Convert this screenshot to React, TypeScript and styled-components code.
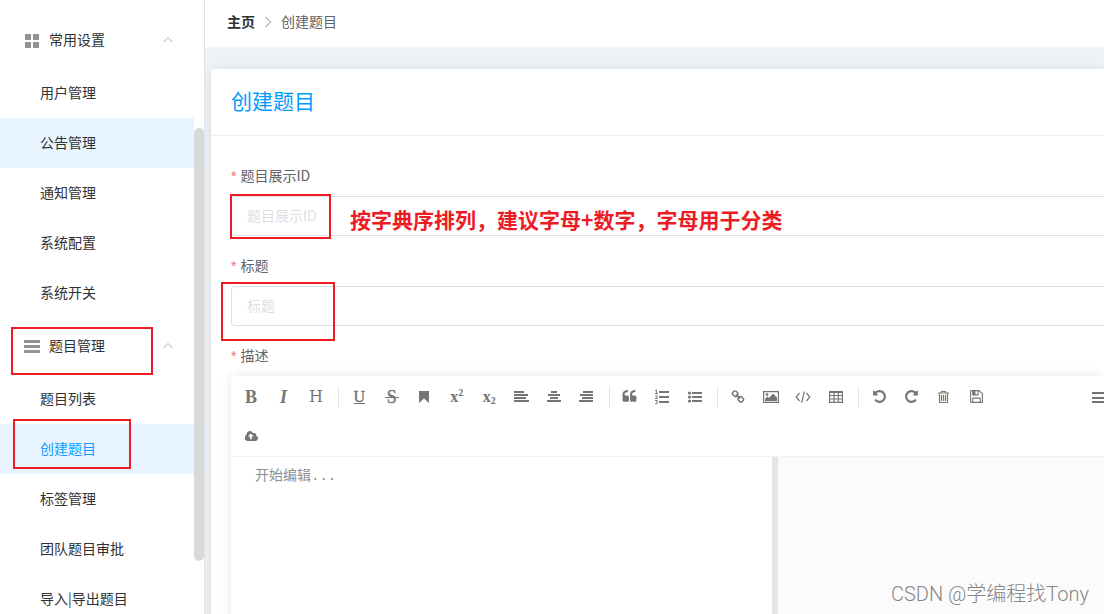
import React from 'react';
import styled, { createGlobalStyle } from 'styled-components';

const GlobalStyle = createGlobalStyle`
  * { box-sizing: border-box; }
  body {
    margin: 0;
    background: #edf2f6;
    color: #303133;
    font-family: "Noto Sans CJK SC", sans-serif;
    font-size: 14px;
  }
  button, input, textarea { font: inherit; }
`;

const Page = styled.div`
  position: relative;
  display: flex;
  height: 100vh;
  overflow: hidden;
`;

/* ---------- sidebar ---------- */

const Sidebar = styled.nav`
  position: relative;
  flex: 0 0 205px;
  padding: 12px 10px 0 0;
  overflow: hidden;
  background: #fff;
  border-right: 1px solid #dfe2e6;
`;

const GroupTitle = styled.button`
  display: flex;
  align-items: center;
  width: 100%;
  height: 56px;
  padding: 0 20px 0 24px;
  border: 0;
  background: none;
  color: inherit;
  text-align: left;
  gap: 9px;
  & > span { flex: 1; padding-bottom: 2px; }
`;

const MenuList = styled.ul`
  margin: 0;
  padding: 0;
  list-style: none;
`;

const MenuLink = styled.a<{ $tinted?: boolean; $active?: boolean }>`
  display: block;
  height: 50px;
  padding-left: 40px;
  line-height: 48px;
  text-decoration: none;
  white-space: nowrap;
  color: ${(p) => (p.$active ? '#0f9bff' : '#303133')};
  background: ${(p) => (p.$tinted ? '#e8f5ff' : 'transparent')};
`;

const ScrollThumb = styled.div`
  position: absolute;
  top: 128px;
  right: 0;
  width: 10px;
  height: 433px;
  border-radius: 5px;
  background: #d9d9d9;
`;

/* ---------- main column ---------- */

const Main = styled.main`
  flex: 1;
  min-width: 0;
  display: flex;
  flex-direction: column;
`;

const Breadcrumb = styled.nav`
  display: flex;
  align-items: center;
  flex: 0 0 48px;
  gap: 8px;
  padding: 0 0 6px 22px;
  background: #fff;
  border-bottom: 1px solid #f5f7f9;
  color: #606266;
  & > a {
    color: #303133;
    font-weight: 700;
    text-decoration: none;
  }
`;

const Card = styled.section`
  flex: 1;
  margin: 21px 0 0 6px;
  background: #fff;
  border-radius: 4px 0 0 0;
  box-shadow: 0 2px 12px rgba(0, 0, 0, 0.1);
`;

const CardTitle = styled.h1`
  margin: 0;
  height: 67px;
  padding-left: 20px;
  border-bottom: 1px solid #ebeef5;
  color: #009bff;
  font-size: 21px;
  font-weight: 400;
  line-height: 62px;
`;

const Form = styled.form`
  padding: 20px 0 0 20px;
`;

const Field = styled.div`
  margin-bottom: 10px;
`;

const Label = styled.label`
  display: block;
  height: 40px;
  line-height: 38px;
  color: #606266;
  &::before {
    content: "*";
    margin-right: 4px;
    color: #f56c6c;
    font-family: "Liberation Sans", sans-serif;
  }
`;

const TextInput = styled.input`
  display: block;
  width: 100%;
  height: 40px;
  padding: 0 15px 2px;
  border: 1px solid #dcdfe6;
  border-right: 0;
  border-radius: 4px 0 0 4px;
  background: #fff;
  outline: none;
  &::placeholder { color: #dcdfe6; opacity: 1; }
`;

/* ---------- markdown editor ---------- */

const Editor = styled.div`
  display: flex;
  flex-direction: column;
  border-radius: 4px 0 0 0;
  background: #fff;
  box-shadow: 0 0 12px rgba(0, 0, 0, 0.1);
`;

const Toolbar = styled.div`
  display: flex;
  border-bottom: 1px solid #eef4fb;
`;

const Tools = styled.div`
  flex: 1;
  padding: 0 80px 0 6px;
  font-family: "Liberation Sans", sans-serif;
  font-size: 16px;
  line-height: 40px;
`;

const ViewTools = styled.div`
  flex: 0 0 20px;
  overflow: hidden;
  white-space: nowrap;
  line-height: 40px;
`;

const Tool = styled.button`
  display: inline-flex;
  align-items: center;
  justify-content: center;
  width: 28px;
  height: 28px;
  padding: 0;
  border: 0;
  background: none;
  color: #757575;
  vertical-align: middle;
  line-height: 28px;
`;

const ToolDivider = styled.span`
  display: inline-block;
  height: 22px;
  margin: 0 6px 0 4px;
  border-left: 1px solid #e5e5e5;
  vertical-align: middle;
`;

const Glyph = styled.span<{ $size?: number; $bold?: boolean; $italic?: boolean; $line?: string }>`
  font-family: "Liberation Serif", serif;
  font-size: ${(p) => p.$size ?? 18}px;
  font-weight: ${(p) => (p.$bold ? 700 : 400)};
  font-style: ${(p) => (p.$italic ? 'italic' : 'normal')};
  text-decoration: ${(p) => p.$line ?? 'none'};
  text-decoration-thickness: 1px;
  -webkit-text-stroke: ${(p) => (p.$bold ? '0' : '0.4px')} currentColor;
  & > sup, & > sub { font-size: 10px; line-height: 0; }
  & > sub { vertical-align: -2px; }
`;

const WideGlyph = styled(Glyph)`
  font-family: "DejaVu Serif", serif;
  -webkit-text-stroke: 0;
`;

const StruckGlyph = styled(Glyph)`
  padding: 0 2px;
  background: linear-gradient(currentColor, currentColor) center 52% / 100% 1px no-repeat;
`;

const Panes = styled.div`
  display: flex;
  height: 420px;
`;

const Writing = styled.textarea`
  flex: 1 1 541px;
  min-width: 0;
  padding: 8px 24px;
  border: 0;
  outline: none;
  resize: none;
  background: #fff;
  font-family: "Liberation Mono", "Noto Sans CJK SC", monospace;
  font-size: 14px;
  line-height: 22px;
  &::placeholder { color: #8b8f96; opacity: 1; }
`;

const Preview = styled.div`
  flex: 0 1 332px;
  border-left: 6px solid #e5e5e5;
  background: #fbfbfb;
`;

/* ---------- annotations drawn over the page ---------- */

const Mark = styled.div<{ $x: number; $y: number; $w: number; $h: number }>`
  position: absolute;
  left: ${(p) => p.$x}px;
  top: ${(p) => p.$y}px;
  width: ${(p) => p.$w}px;
  height: ${(p) => p.$h}px;
  border: 2px solid #ed1c24;
  pointer-events: none;
`;

const Note = styled.strong`
  position: absolute;
  left: 350px;
  top: 203px;
  color: #ed1c24;
  font-size: 21px;
  line-height: 32px;
  white-space: nowrap;
  pointer-events: none;
`;

const Watermark = styled.div`
  position: absolute;
  right: 15px;
  bottom: 4px;
  color: #858585;
  font-family: Roboto, "Noto Sans CJK SC", sans-serif;
  font-size: 20px;
  font-weight: 300;
  line-height: 32px;
  text-shadow: -1px -1px 0 #fff;
  white-space: nowrap;
  pointer-events: none;
`;

/* ---------- icons ---------- */

const GridIcon = () => (
  <svg width="16" height="16" viewBox="0 0 16 16" fill="#909399">
    <path d="M1 2h6v6H1zM9 2h6v6H9zM1 10h6v6H1zM9 10h6v6H9z" />
  </svg>
);

const BarsIcon = () => (
  <svg width="16" height="16" viewBox="0 0 16 16" fill="#909399">
    <path d="M0 2h16v3H0zM0 7h16v3H0zM0 12h16v3H0z" />
  </svg>
);

const ChevronUp = () => (
  <svg width="12" height="12" viewBox="0 0 12 12" fill="none" stroke="#a5a8ae">
    <path d="M1.5 8L6 3.5L10.5 8" />
  </svg>
);

const ChevronRight = () => (
  <svg width="10" height="14" viewBox="0 0 10 14" fill="none" stroke="#b4b8c0" strokeWidth="1.2">
    <path d="M2.5 3L7.5 8L2.5 13" />
  </svg>
);

const FA = ({ d, w = 15, box = '0 0 1792 1792' }: { d: string; w?: number; box?: string }) => (
  <svg width={w} height={w} viewBox={box} fill="currentColor">
    <path d={d} />
  </svg>
);

const Px = ({ children }: { children: React.ReactNode }) => (
  <svg width="16" height="16" viewBox="0 0 16 16" fill="currentColor">
    {children}
  </svg>
);

const quoteHalf =
  'v384q0 80-56 136t-136 56h-384q-80 0-136-56t-56-136v-704q0-104 40.5-198.5t109.5-163.5 163.5-109.5 198.5-40.5h64q26 0 45 19t19 45v128q0 26-19 45t-45 19h-64q-106 0-181 75t-75 181v32q0 40 28 68t68 28h224q80 0 136 56t56 136z';

const paths = {
  quote: `M832 960${quoteHalf}M1728 960${quoteHalf}`,
  link: 'M1520 1216q0-40-28-68l-208-208q-28-28-68-28-42 0-72 32 3 3 19 18.5t21.5 21.5 15 19 13 25.5 3.5 27.5q0 40-28 68t-68 28q-15 0-27.5-3.5t-25.5-13-19-15-21.5-21.5-18.5-19q-33 31-33 73 0 40 28 68l206 207q27 27 68 27 40 0 68-26l147-146q28-28 28-67zm-703-705q0-40-28-68l-206-207q-28-28-68-28-39 0-68 27l-147 146q-28 28-28 67 0 40 28 68l208 208q27 27 68 27 42 0 72-31-3-3-19-18.5t-21.5-21.5-15-19-13-25.5-3.5-27.5q0-40 28-68t68-28q15 0 27.5 3.5t25.5 13 19 15 21.5 21.5 18.5 19q33-31 33-73zm895 705q0 120-85 203l-147 146q-83 83-203 83-121 0-204-85l-206-207q-83-83-83-203 0-123 88-209l-88-88q-86 88-208 88-120 0-204-84l-208-208q-84-84-84-204t85-203l147-146q83-83 203-83 121 0 204 85l206 207q83 83 83 203 0 123-88 209l88 88q86-88 208-88 120 0 204 84l208 208q84 84 84 204z',
  undo: 'M1664 896q0 156-61 298t-164 245-245 164-298 61q-172 0-327-72.5t-264-204.5q-7-10-6.5-22.5t8.5-20.5l137-138q10-9 25-9 16 2 23 12 73 95 179 147t225 52q104 0 198.5-40.5t163.5-109.5 109.5-163.5 40.5-198.5-40.5-198.5-109.5-163.5-163.5-109.5-198.5-40.5q-98 0-188 35.5t-160 101.5l137 138q31 30 14 69-17 40-59 40h-448q-26 0-45-19t-19-45v-448q0-42 40-59 39-17 69 14l130 129q107-101 244.5-156.5t284.5-55.5q156 0 298 61t245 164 164 245 61 298z',
  redo: 'M1664 256v448q0 26-19 45t-45 19h-448q-42 0-59-40-17-39 14-69l138-138q-148-137-349-137-104 0-198.5 40.5t-163.5 109.5-109.5 163.5-40.5 198.5 40.5 198.5 109.5 163.5 163.5 109.5 198.5 40.5q119 0 225-52t179-147q7-10 23-12 15 0 25 9l137 138q9 8 9.5 20.5t-7.5 22.5q-109 132-264 204.5t-327 72.5q-156 0-298-61t-245-164-164-245-61-298 61-298 164-245 245-164 298-61q147 0 284.5 55.5t244.5 156.5l130-129q29-31 70-14 39 17 39 59z',
  save: 'M512 1536h768v-384h-768v384zm896 0h128v-896q0-14-10-38.5t-20-34.5l-281-281q-10-10-34-20t-39-10v416q0 40-28 68t-68 28h-576q-40 0-68-28t-28-68v-416h-128v1280h128v-416q0-40 28-68t68-28h832q40 0 68 28t28 68v416zm-384-928v-320q0-13-9.5-22.5t-22.5-9.5h-192q-13 0-22.5 9.5t-9.5 22.5v320q0 13 9.5 22.5t22.5 9.5h192q13 0 22.5-9.5t9.5-22.5zm640 32v928q0 40-28 68t-68 28h-1344q-40 0-68-28t-28-68v-1344q0-40 28-68t68-28h928q40 0 88 20t76 48l280 280q28 28 48 76t20 88z',
  upload: 'M1216 864q0-14-9-23l-352-352q-9-9-23-9t-23 9l-351 351q-10 12-10 24 0 14 9 23t23 9h224v352q0 13 9.5 22.5t22.5 9.5h192q13 0 22.5-9.5t9.5-22.5v-352h224q13 0 22.5-9.5t9.5-22.5zm640 288q0 159-112.5 271.5t-271.5 112.5h-1088q-185 0-316.5-131.5t-131.5-316.5q0-130 70-240t188-165q-2-30-2-43 0-212 150-362t362-150q156 0 285.5 87t188.5 231q71-62 166-62 106 0 181 75t75 181q0 76-41 138 130 31 213.5 135.5t83.5 238.5z',
};

const tools: (null | [string, React.ReactNode])[] = [
  ['粗体', <Glyph $bold>B</Glyph>],
  ['斜体', <Glyph $bold $italic>I</Glyph>],
  ['标题', <WideGlyph $size={16}>H</WideGlyph>],
  null,
  ['下划线', <Glyph $size={16} $line="underline">U</Glyph>],
  ['中划线', <StruckGlyph>S</StruckGlyph>],
  ['标记', <Px><path d="M3 2h10v12l-5-4.5L3 14z" /></Px>],
  ['上角标', <Glyph $size={16} $bold>x<sup>2</sup></Glyph>],
  ['下角标', <Glyph $size={16} $bold>x<sub>2</sub></Glyph>],
  ['左对齐', <Px><path d="M0 2h10v2H0zM0 5h14v2H0zM0 8h12v2H0zM0 11h15v2H0z" /></Px>],
  ['居中', <Px><path d="M5 2h6v2H5zM2 5h12v2H2zM4 8h8v2H4zM1 11h14v2H1z" /></Px>],
  ['右对齐', <Px><path d="M4 2h10v2H4zM1 5h13v2H1zM3 8h11v2H3zM0 11h14v2H0z" /></Px>],
  null,
  ['段落引用', <FA d={paths.quote} />],
  ['有序列表', (
    <Px>
      <path d="M5 2h10v2H5zM5 7h10v2H5zM5 12h10v2H5z" />
      <path d="M1 2L2.5 1V4.5M1 4.5h3M1 7Q2.5 5.5 3.5 6.8Q3.5 8 1.2 9.5H4M1 11.5h2.5L2.3 13Q4 13.3 3.2 14.6Q2 15.4 1 14.6" fill="none" stroke="currentColor" strokeWidth="0.9" />
    </Px>
  )],
  ['无序列表', (
    <Px>
      <path d="M5 3h10v2H5zM5 7h10v2H5zM5 11h10v2H5z" />
      <circle cx="2.5" cy="4" r="1.6" /><circle cx="2.5" cy="8" r="1.6" /><circle cx="2.5" cy="12" r="1.6" />
    </Px>
  )],
  null,
  ['链接', <FA d={paths.link} w={14} />],
  ['图片', (
    <Px>
      <path fillRule="evenodd" d="M0 2h16v12H0zM1.2 3.2v9.6h13.6V3.2z" />
      <circle cx="4" cy="5.6" r="1.4" />
      <path d="M2 12v-2l2.5-2.5L6 9l4-4.5 4 4V12z" />
    </Px>
  )],
  ['代码块', (
    <Px>
      <path d="M4.5 4L1.2 8L4.5 12M11.5 4L14.8 8L11.5 12M9.4 2.5L6.6 13.8" fill="none" stroke="currentColor" strokeWidth="1.2" />
    </Px>
  )],
  ['表格', (
    <Px>
      <path d="M1.6 2.6h12.8v10.8H1.6zM1 3.3h14M1 6.5h14M1 10h14M6 3v10M10.3 3v10" fill="none" stroke="currentColor" strokeWidth="1.2" />
    </Px>
  )],
  null,
  ['上一步', <FA d={paths.undo} />],
  ['下一步', <FA d={paths.redo} />],
  ['清空', (
    <Px>
      <path d="M2 4h11M5.5 4V2.5h4V4M3.5 4v9.5h8V4M5.5 6v6M7.5 6v6M9.5 6v6" fill="none" stroke="#8a7664" strokeWidth="1.2" />
    </Px>
  )],
  ['保存', <FA d={paths.save} />],
  ['上传', <FA d={paths.upload} w={13} box="0 0 1856 1792" />],
];

const commonItems = ['用户管理', '公告管理', '通知管理', '系统配置', '系统开关'];
const problemItems = ['题目列表', '创建题目', '标签管理', '团队题目审批', '导入|导出题目'];

export default function App() {
  return (
    <Page>
      <GlobalStyle />
      <Sidebar>
        <GroupTitle type="button"><GridIcon /><span>常用设置</span><ChevronUp /></GroupTitle>
        <MenuList>
          {commonItems.map((t) => (
            <li key={t}><MenuLink href="#" $tinted={t === '公告管理'}>{t}</MenuLink></li>
          ))}
        </MenuList>
        <GroupTitle type="button"><BarsIcon /><span>题目管理</span><ChevronUp /></GroupTitle>
        <MenuList>
          {problemItems.map((t) => (
            <li key={t}>
              <MenuLink href="#" $tinted={t === '创建题目'} $active={t === '创建题目'}>{t}</MenuLink>
            </li>
          ))}
        </MenuList>
        <ScrollThumb />
      </Sidebar>

      <Main>
        <Breadcrumb>
          <a href="#">主页</a>
          <ChevronRight />
          <span>创建题目</span>
        </Breadcrumb>
        <Card>
          <CardTitle>创建题目</CardTitle>
          <Form>
            <Field>
              <Label htmlFor="display-id">题目展示ID</Label>
              <TextInput id="display-id" placeholder="题目展示ID" />
            </Field>
            <Field>
              <Label htmlFor="title">标题</Label>
              <TextInput id="title" placeholder="标题" />
            </Field>
            <Label htmlFor="description">描述</Label>
            <Editor>
              <Toolbar>
                <Tools>
                  {tools.map((tool, i) =>
                    tool === null ? (
                      <ToolDivider key={i} />
                    ) : (
                      <React.Fragment key={i}>
                        <Tool type="button" aria-label={tool[0]}>{tool[1]}</Tool>{' '}
                      </React.Fragment>
                    ),
                  )}
                </Tools>
                <ViewTools>
                  <Tool type="button" aria-label="目录">
                    <Px><path d="M2 2h14v2H2zM2 7h14v2H2zM2 11h14v2H2z" /></Px>
                  </Tool>
                </ViewTools>
              </Toolbar>
              <Panes>
                <Writing id="description" placeholder="开始编辑..." />
                <Preview />
              </Panes>
            </Editor>
          </Form>
        </Card>
      </Main>

      <Mark $x={11} $y={327} $w={142} $h={48} />
      <Mark $x={13} $y={419} $w={118} $h={50} />
      <Mark $x={230} $y={194} $w={101} $h={45} />
      <Mark $x={221} $y={282} $w={114} $h={59} />
      <Note>按字典序排列，建议字母+数字，字母用于分类</Note>
      <Watermark>CSDN @学编程找Tony</Watermark>
    </Page>
  );
}
